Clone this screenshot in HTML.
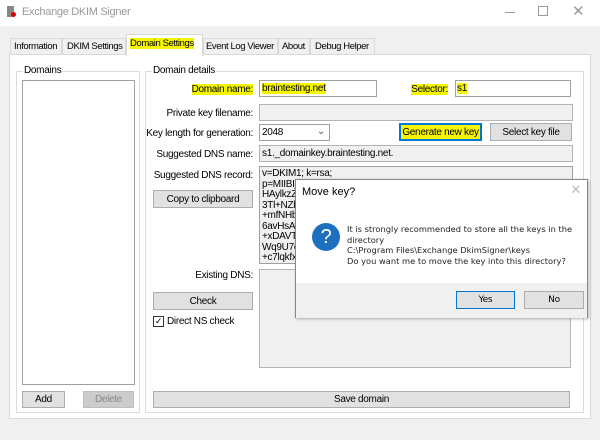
<!DOCTYPE html>
<html><head><meta charset="utf-8"><style>
*{box-sizing:border-box;margin:0;padding:0}
body{width:600px;height:440px;background:#f0f0f0;font-family:"Liberation Sans",sans-serif;font-size:10px;color:#000;position:relative;overflow:hidden;letter-spacing:-0.3px}
.a{position:absolute;white-space:nowrap}
.box{position:absolute;background:#fff;border:1px solid #a0a0a0;white-space:nowrap}
.ro{position:absolute;background:#f0f0f0;border:1px solid #b4b4b4;white-space:nowrap}
.btn{position:absolute;background:#e1e1e1;border:1px solid #adadad;display:flex;align-items:center;justify-content:center;white-space:nowrap}
.lbl{position:absolute;text-align:right;white-space:nowrap}
.hl{background:#f5f500}
.grp{position:absolute;border:1px solid #dcdcdc}
.gt{position:absolute;top:-7px;left:6px;background:#fff;padding:0 1px;white-space:nowrap}
.tab{position:absolute;top:38px;height:17px;border:1px solid #d9d9d9;line-height:15px;white-space:nowrap;font-size:9.5px;letter-spacing:-0.4px}
</style></head><body>
<div class="a" style="left:0;top:0;width:600px;height:26px;background:#fff"></div>
<div class="a" style="left:7px;top:6px;width:7px;height:11px;background:#888"></div>
<div class="a" style="left:11px;top:12px;width:5px;height:5px;background:#d00;border-radius:50%"></div>
<div class="a" style="left:22px;top:6px;color:#999;font-size:11px">Exchange DKIM Signer</div>
<div class="a" style="left:505px;top:12px;width:10px;height:1px;background:#999"></div>
<div class="a" style="left:538px;top:6px;width:10px;height:10px;border:1px solid #999"></div>
<div class="a" style="left:572px;top:2px;color:#999;font-size:15px">✕</div>

<div class="a" style="left:9px;top:54px;width:582px;height:365px;background:#fff;border:1px solid #d9d9d9"></div>
<div class="tab" style="left:10px;width:52px;padding-left:3px">Information</div>
<div class="tab" style="left:62px;width:64px;padding-left:4px">DKIM Settings</div>
<div class="a" style="left:126px;top:34px;width:77px;height:22px;background:#fff;border:1px solid #d9d9d9;border-bottom:none;padding:3px 0 0 3px;font-size:9.5px;letter-spacing:-0.4px"><span class="hl">Domain Settings</span></div>
<div class="tab" style="left:203px;width:75px;padding-left:2px">Event Log Viewer</div>
<div class="tab" style="left:278px;width:32px;padding-left:3px">About</div>
<div class="tab" style="left:310px;width:65px;padding-left:4px">Debug Helper</div>

<div class="grp" style="left:16px;top:71px;width:124px;height:342px"><span class="gt">Domains</span></div>
<div class="box" style="left:22px;top:80px;width:113px;height:305px"></div>
<div class="btn" style="left:22px;top:391px;width:43px;height:17px">Add</div>
<div class="btn" style="left:83px;top:391px;width:51px;height:17px;background:#ccc;border-color:#bfbfbf;color:#888">Delete</div>

<div class="grp" style="left:145px;top:71px;width:439px;height:342px"><span class="gt">Domain details</span></div>
<div class="lbl" style="right:347px;top:84px"><span class="hl">Domain name:</span></div>
<div class="box" style="left:259px;top:80px;width:118px;height:17px;padding:2px 0 0 2px"><span class="hl">braintesting.net</span></div>
<div class="lbl" style="right:152px;top:84px"><span class="hl">Selector:</span></div>
<div class="box" style="left:455px;top:80px;width:116px;height:17px;padding:2px 0 0 1px"><span class="hl">s1</span></div>
<div class="lbl" style="right:347px;top:108px">Private key filename:</div>
<div class="ro" style="left:259px;top:104px;width:314px;height:17px"></div>
<div class="lbl" style="right:347px;top:128px">Key length for generation:</div>
<div class="box" style="left:259px;top:124px;width:71px;height:17px;padding:2px 0 0 2px">2048<span style="position:absolute;right:4px;top:1px;color:#555">⌄</span></div>
<div class="btn" style="left:399px;top:123px;width:83px;height:18px;border:2px solid #0078d7;background:#f5f500">Generate new key</div>
<div class="btn" style="left:490px;top:123px;width:82px;height:18px">Select key file</div>
<div class="lbl" style="right:347px;top:149px">Suggested DNS name:</div>
<div class="ro" style="left:259px;top:145px;width:314px;height:17px;padding:2px 0 0 2px">s1._domainkey.braintesting.net.</div>
<div class="lbl" style="right:347px;top:170px">Suggested DNS record:</div>
<div class="box" style="left:259px;top:166px;width:314px;height:98px;background:#f0f0f0;padding:2px;line-height:10.5px;font-size:10px">v=DKIM1; k=rsa;<br>p=MIIBIjA<br>HAylkzZ<br>3Tl+NZb<br>+mfNHb<br>6avHsAi<br>+xDAVT<br>Wq9U7c<br>+c7lqkfx</div>
<div class="btn" style="left:153px;top:190px;width:100px;height:18px">Copy to clipboard</div>
<div class="lbl" style="right:347px;top:270px">Existing DNS:</div>
<div class="ro" style="left:259px;top:269px;width:312px;height:99px"></div>
<div class="btn" style="left:153px;top:292px;width:100px;height:18px">Check</div>
<div class="a" style="left:153px;top:316px;width:11px;height:11px;border:1px solid #333;background:#fff;font-size:9px;line-height:9px;text-align:center">✓</div>
<div class="a" style="left:167px;top:316px">Direct NS check</div>
<div class="btn" style="left:153px;top:391px;width:417px;height:17px">Save domain</div>

<div class="a" style="left:295px;top:179px;width:293px;height:139px;background:#fff;border:1px solid #888;box-shadow:1px 1px 3px rgba(0,0,0,.3)">
 <div class="a" style="left:6px;top:6px;font-size:11px;letter-spacing:0">Move key?</div>
 <div class="a" style="right:6px;top:2px;color:#bbb;font-size:13px">✕</div>
 <div class="a" style="left:16px;top:43px;width:28px;height:28px;border-radius:50%;background:#1f6fc1;color:#fff;font-size:20px;text-align:center;line-height:28px">?</div>
 <div class="a" style="left:51px;top:44px;font-family:'DejaVu Sans',sans-serif;font-size:8.3px;line-height:10.6px;letter-spacing:0;color:#222">It is strongly recommended to store all the keys in the<br>directory<br>C:\Program Files\Exchange DkimSigner\keys<br>Do you want me to move the key into this directory?</div>
 <div class="a" style="left:0;top:103px;width:291px;height:35px;background:#f0f0f0"></div>
 <div class="btn" style="left:160px;top:111px;width:59px;height:18px;border-color:#0078d7;font-family:'DejaVu Sans',sans-serif;font-size:9px">Yes</div>
 <div class="btn" style="left:228px;top:111px;width:60px;height:18px;font-family:'DejaVu Sans',sans-serif;font-size:9px">No</div>
</div>
</body></html>
